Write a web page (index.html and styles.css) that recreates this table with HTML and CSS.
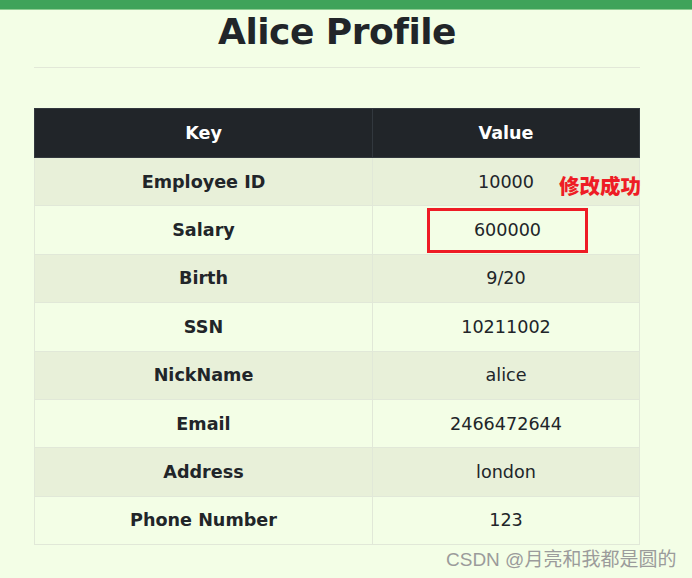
FILE: index.html
```html
<!DOCTYPE html>
<html>
<head>
<meta charset="utf-8">
<link rel="stylesheet" href="styles.css">
</head>
<body>
<div class="topbar"></div>
<main class="page">
  <h1 class="title">Alice Profile</h1>
  <hr class="rule">
  <table class="profile">
    <thead>
      <tr><th>Key</th><th>Value</th></tr>
    </thead>
    <tbody>
      <tr><td class="k">Employee ID</td><td class="v">10000<span class="note">修改成功</span></td></tr>
      <tr><td class="k">Salary</td><td class="v"><span class="mark">600000</span></td></tr>
      <tr><td class="k">Birth</td><td class="v">9/20</td></tr>
      <tr><td class="k">SSN</td><td class="v">10211002</td></tr>
      <tr><td class="k">NickName</td><td class="v">alice</td></tr>
      <tr><td class="k">Email</td><td class="v">2466472644</td></tr>
      <tr><td class="k">Address</td><td class="v">london</td></tr>
      <tr><td class="k">Phone Number</td><td class="v">123</td></tr>
    </tbody>
  </table>
</main>
<div class="watermark">CSDN @月亮和我都是圆的</div>
</body>
</html>
```

FILE: styles.css
```css
html, body {
  margin: 0;
  padding: 0;
}
body {
  background: #f3fee6;
  font-family: "DejaVu Sans", "Noto Sans CJK SC", sans-serif;
  color: #212529;
  width: 692px;
  height: 578px;
  overflow: hidden;
  position: relative;
}
.topbar {
  height: 9px;
  background: #3fa35a;
  border-bottom: 1px solid #8fcc92;
}
.page {
  width: 606px;
  margin-left: 34px;
}
.title {
  margin: 0;
  padding-top: 1px;
  text-align: center;
  font-size: 36px;
  line-height: 42px;
  font-weight: bold;
  letter-spacing: -0.5px;
  color: #212529;
}
.rule {
  margin: 14px 0 0 0;
  border: 0;
  border-top: 1px solid #e2e8d8;
  height: 0;
}
.profile {
  margin-top: 40px;
  width: 606px;
  border-collapse: collapse;
  table-layout: fixed;
  font-size: 17.6px;
}
.profile th, .profile td {
  text-align: center;
  vertical-align: middle;
  border: 1px solid #e1e8d8;
  padding: 0;
}
.profile th:first-child, .profile td:first-child {
  width: 337px;
}
.profile thead th {
  background: #212529;
  color: #ffffff;
  border-color: #32383e;
  height: 48px;
  font-weight: bold;
}
.profile tbody td {
  height: 47.4px;
}
.profile tbody tr:nth-child(odd) td {
  background: #e8f0d9;
}
.profile tbody tr:nth-child(even) td {
  background: #f3fee6;
}
.k {
  font-weight: bold;
}
.v {
  position: relative;
}
.note {
  position: absolute;
  left: 186px;
  top: 14px;
  color: #ee1c25;
  font-weight: 900;
  font-size: 20.5px;
  font-family: "Noto Sans CJK SC", sans-serif;
  line-height: 26px;
  white-space: nowrap;
}
.mark {
  display: inline-block;
  width: 155px;
  height: 39px;
  line-height: 39px;
  border: 3px solid #ee1c25;
  margin-left: 3px;
}
.watermark {
  position: absolute;
  left: 446px;
  top: 544px;
  font-family: "Liberation Sans", "Noto Sans CJK SC", sans-serif;
  font-size: 19px;
  color: #9b9b9b;
  white-space: nowrap;
}
```
